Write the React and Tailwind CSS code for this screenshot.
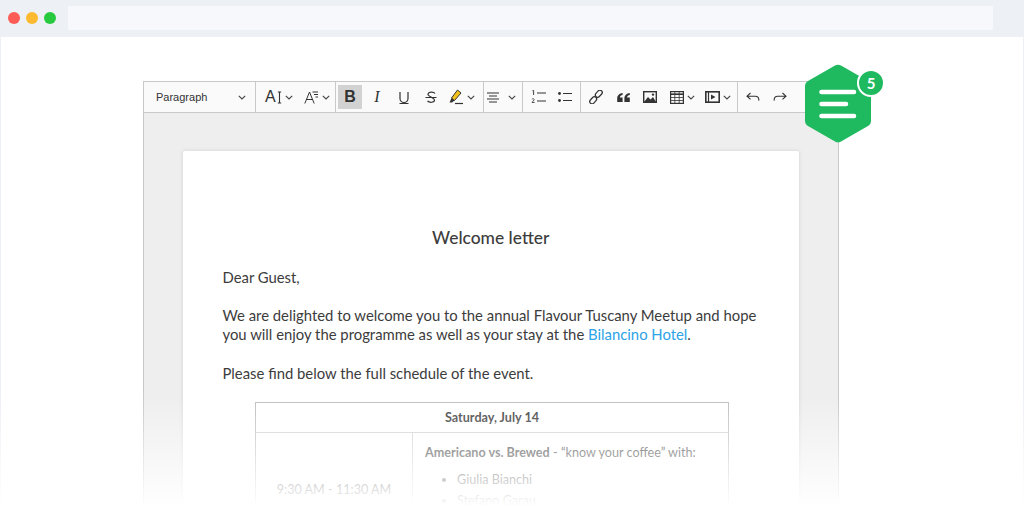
const I = ({ w = 16, h = 16, children, vb, cls = "" }) => (
  <svg width={w} height={h} viewBox={vb || `0 0 ${w} ${h}`} fill="none" stroke="#333" strokeWidth="1.2" className={cls}>{children}</svg>
);
const Chev = ({ cls = "" }) => (
  <svg width="8" height="5" viewBox="0 0 8 5" fill="none" stroke="#444" strokeWidth="1.1" className={cls}><path d="M.8.8 4 4 7.2.8" /></svg>
);
const Btn = ({ children, active, w = "w-[24px]" }) => (
  <div className={`h-[24px] ${w} shrink-0 flex items-center justify-center gap-[3px] ${active ? "bg-[#d2d2d2]" : ""}`}>{children}</div>
);
const Group = ({ cls, children }) => (
  <div className={`${cls} h-full flex items-center gap-[3px] border-r border-[#c9c9c9] shrink-0`}>{children}</div>
);

export default function App() {
  return (
    <div className="relative h-[530px] w-[1024px] overflow-hidden bg-white font-['Liberation_Sans',sans-serif]">
      <header className="h-[37px] bg-[#edf0f5] flex items-center pl-[8px] pb-[1px]">
        <div className="flex gap-[6px]">
          <span className="w-[12px] h-[12px] rounded-full bg-[#fd5c56]" />
          <span className="w-[12px] h-[12px] rounded-full bg-[#fdb92f]" />
          <span className="w-[12px] h-[12px] rounded-full bg-[#27c93f]" />
        </div>
        <div className="ml-[12px] w-[925px] h-[24px] bg-[#f6f8fb]" />
      </header>
      <main className="h-[493px] border-x border-[#edf0f5] bg-white pt-[44px] pl-[142px]">
        <div className="w-[696px] h-[449px] border-x border-[#c9c9c9] bg-[#eeeeee] relative">
          <div className="-mx-px h-[32px] bg-[#fafafa] border border-[#c9c9c9] flex items-center">
            <Group cls="w-[112px] pl-[12px] pr-[9px]">
              <span className="text-[11px] text-[#333] flex-1">Paragraph</span>
              <Chev />
            </Group>
            <Group cls="w-[80px] pl-[9px]">
              <div className="w-[34px] flex items-center gap-[3px]">
                <span className="text-[16px] leading-none text-[#333]">A</span>
                <svg width="5" height="13" viewBox="0 0 5 13" fill="none" stroke="#333" strokeWidth="1.1" className="-ml-[2px]">
                  <path d="M2.5 1v11M.8 1h3.4M.8 12h3.4" />
                </svg>
                <Chev />
              </div>
              <div className="ml-[2px] flex items-center gap-[3px]">
                <I w={15} h={15}>
                  <path d="M.8 13.5 5.5 2l4.7 11.5M2.6 9.5h5.8M8.5 2h5.5M10 4.5h4M11.5 7h2.5" strokeWidth="1" />
                </I>
                <Chev />
              </div>
            </Group>
            <Group cls="w-[148px] pl-[2px]">
              <Btn active><span className="text-[16px] font-bold text-[#333] leading-none">B</span></Btn>
              <Btn><span className="font-['Liberation_Serif',serif] italic text-[16px] text-[#333] leading-none">I</span></Btn>
              <Btn>
                <I w={14} h={15}><path d="M3 2v6.5a4 4 0 0 0 8 0V2M2.5 13.5h9" /></I>
              </Btn>
              <Btn>
                <I w={14} h={14}><path d="M11 3.5C10 2 5 1.2 4 4c-.8 2.6 6 3.2 6.5 6 .3 2.6-5 3-7 1M1.5 7.5h11" /></I>
              </Btn>
              <div className="flex items-center gap-[3px] ml-[2px]">
                <svg width="16" height="16" viewBox="0 0 16 16">
                  <path d="M9.5 1 13 4 6.5 11.5l-3-2.5z" fill="#f2c21b" stroke="#333" strokeWidth="1" />
                  <path d="M3.5 9 6.5 11.5 4 13.5H1.5z" fill="#333" />
                  <path d="M7 14.5h8" stroke="#333" strokeWidth="1.2" />
                </svg>
                <Chev />
              </div>
            </Group>
            <Group cls="w-[39px] pl-[2px]">
              <div className="flex items-center gap-[8px]">
                <I w={14} h={13}><path d="M1 2h12M3 5h8M1 8h12M3 11h8" strokeWidth="1" /></I>
                <Chev />
              </div>
            </Group>
            <Group cls="w-[58px] pl-[3px]">
              <Btn>
                <svg width="15" height="14" viewBox="0 0 15 14" fill="none" stroke="#333">
                  <path d="M6 3h9M6 11h9" strokeWidth="1.2" />
                  <path d="M1.4.8 2.6.3V5" strokeWidth=".9" />
                  <path d="M.9 9.3c1-1 2.6-.6 2.2.6L1 12.5h2.6" strokeWidth=".8" />
                </svg>
              </Btn>
              <Btn>
                <svg width="14" height="10" viewBox="0 0 14 10" fill="none" stroke="#333">
                  <path d="M5 1.5h9M5 8.5h9" strokeWidth="1.2" />
                  <circle cx="1.5" cy="1.5" r="1.4" fill="#333" stroke="none" />
                  <circle cx="1.5" cy="8.5" r="1.4" fill="#333" stroke="none" />
                </svg>
              </Btn>
            </Group>
            <Group cls="w-[157px] pl-[3px]">
              <Btn>
                <svg width="14" height="14" viewBox="0 0 14 14" fill="none" stroke="#333" strokeWidth="1.2">
                  <rect x="-2.3" y="-5.2" width="4.6" height="8" rx="2.3" transform="translate(9 4.6) rotate(42)" />
                  <rect x="-2.3" y="-2.8" width="4.6" height="8" rx="2.3" transform="translate(5 9.4) rotate(42)" />
                </svg>
              </Btn>
              <Btn>
                <svg width="13" height="9" viewBox="0 0 14 10" fill="#333"><path d="M6 0C2.5.6 0 2.4 0 6v4h6V5H3c0-1.5 1.3-2.4 3-2.7zM14 0c-3.5.6-6 2.4-6 6v4h6V5h-3c0-1.5 1.3-2.4 3-2.7z" /></svg>
              </Btn>
              <Btn>
                <svg width="14" height="12" viewBox="0 0 14 12">
                  <rect x=".7" y=".7" width="12.6" height="10.6" fill="none" stroke="#333" strokeWidth="1.4" />
                  <path d="M1 11 5 6l2.5 2.5L10 6l3 5z" fill="#333" />
                  <circle cx="10" cy="3.6" r="1.2" fill="#333" />
                </svg>
              </Btn>
              <div className="flex items-center gap-[3px] ml-[5px] w-[31px]">
                <svg width="14" height="13" viewBox="0 0 14 13" fill="none" stroke="#333">
                  <rect x=".6" y=".6" width="12.8" height="11.8" strokeWidth="1.2" />
                  <path d="M.6 3.2h12.8" strokeWidth="1.6" />
                  <path d="M.6 6.5h12.8M.6 9.5h12.8M4.8 1v11M9.2 1v11" strokeWidth=".8" />
                </svg>
                <Chev />
              </div>
              <div className="flex items-center gap-[3px] ml-[1px]">
                <svg width="15" height="12" viewBox="0 0 15 12" fill="none">
                  <rect x=".8" y=".8" width="13.4" height="10.4" stroke="#333" strokeWidth="1.6" />
                  <path d="M3.5 1v10" stroke="#333" strokeWidth="1.2" />
                  <path d="M6 3.5v5L10.5 6z" fill="#333" />
                </svg>
                <Chev />
              </div>
            </Group>
            <div className="pl-[3px] flex items-center gap-[3px]">
              <Btn>
                <I w={14} h={11}><path d="M4.5 1 1 4.2l3.5 3.2M1.2 4.2h8c2.6 0 4 1.6 3.6 4.5" strokeWidth="1.1" /></I>
              </Btn>
              <Btn>
                <I w={14} h={11}><path d="M9.5 1 13 4.2 9.5 7.4M12.8 4.2h-8C2.2 4.2.8 5.8 1.2 8.7" strokeWidth="1.1" /></I>
              </Btn>
            </div>
          </div>
          <article className="mx-[39px] mt-[38px] h-[380px] bg-white shadow-[0_0_4px_rgba(0,0,0,0.12)] rounded-[2px] pl-[39.5px] pr-[40px] pt-[76px] font-['Lato',sans-serif] text-[14.85px] leading-[19.5px] text-[#3c3c3c]">
            <h1 className="text-center text-[17.4px] font-medium leading-[22px] mb-[19px]">Welcome letter</h1>
            <p className="mb-[18px]">Dear Guest,</p>
            <p className="mb-[19px] w-[540px]">
              We are delighted to welcome you to the annual Flavour Tuscany Meetup and hope you will enjoy the programme as well as your stay at the <span className="text-[#2ba3e6]">Bilancino Hotel</span>.
            </p>
            <p className="mb-[19px]">Please find below the full schedule of the event.</p>
            <div className="ml-[32.5px] w-[474px] border border-[#bfbfbf] text-[12.6px] leading-[18px]">
              <div className="h-[30px] flex items-center justify-center font-bold border-b border-[#d0d0d0]">Saturday, July 14</div>
              <div className="flex h-[90px]">
                <div className="w-[157px] border-r border-[#d0d0d0] pt-[48px] text-center">9:30 AM - 11:30 AM</div>
                <div className="pl-[12px] pt-[11px]">
                  <p><b>Americano vs. Brewed</b> - “know your coffee” with:</p>
                  <ul className="list-disc pl-[32px] mt-[9px] space-y-[3px]">
                    <li>Giulia Bianchi</li>
                    <li>Stefano Garau</li>
                  </ul>
                </div>
              </div>
            </div>
          </article>
        </div>
      </main>
      <div className="absolute left-0 right-0 top-[395px] h-[135px] bg-gradient-to-b from-white/0 via-white/88 via-[74%] to-white to-[82%]" />
      <div className="absolute left-[804px] top-[64px] w-[68px] h-[79px]">
        <svg width="68" height="79" viewBox="0 0 68 79">
          <path d="M31 1.5a6 6 0 0 1 6 0l27 15.5a6 6 0 0 1 3 5.2v34.6a6 6 0 0 1-3 5.2L37 77.5a6 6 0 0 1-6 0L4 62a6 6 0 0 1-3-5.2V22.2A6 6 0 0 1 4 17z" fill="#1fb960" />
          <path d="M17.5 28h32.5M17.5 40h24.5M17.5 52h32.5" stroke="#fff" strokeWidth="4.6" strokeLinecap="round" />
        </svg>
      </div>
      <div className="absolute left-[857px] top-[69px] w-[28px] h-[28px] rounded-full bg-[#1fb960] border-[2.5px] border-white flex items-center justify-center font-['Lato',sans-serif] text-white font-bold text-[15px] leading-none">5</div>
    </div>
  );
}
